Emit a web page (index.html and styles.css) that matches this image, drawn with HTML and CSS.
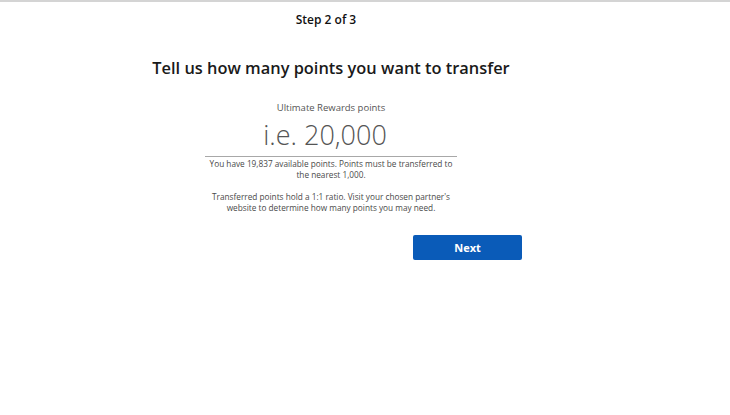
FILE: index.html
```html
<!DOCTYPE html>
<html>
<head>
<meta charset="utf-8">
<link rel="stylesheet" href="styles.css">
</head>
<body>
<div class="topline"></div>
<main class="page">
  <div class="step">Step 2 of 3</div>
  <h1 class="title">Tell us how many points you want to transfer</h1>
  <div class="field">
    <label class="label" for="pts">Ultimate Rewards points</label>
    <input class="input" id="pts" type="text" placeholder="i.e. 20,000">
    <p class="help">You have 19,837 available points. Points must be transferred to the nearest 1,000.</p>
    <p class="help help-gap">Transferred points hold a 1:1 ratio. Visit your chosen partner's website to determine how many points you may need.</p>
  </div>
  <div class="actions">
    <button class="next">Next</button>
  </div>
</main>
</body>
</html>
```

FILE: styles.css
```css
* { box-sizing: border-box; }
html, body { margin: 0; padding: 0; background: #fff; }
body { font-family: "Open Sans", "Noto Sans", sans-serif; color: #1a1a1a; width: 730px; }
.topline { height: 2px; background: #d4d4d4; }
.page { width: 382px; margin-left: 140px; display: flex; flex-direction: column; align-items: center; }
.step { margin-top: 10px; font-size: 12px; font-weight: 600; line-height: 16px; color: #111; margin-left: -10px; }
.title { margin: 28px 0 0; font-size: 16.4px; font-weight: 600; line-height: 24px; color: #1a1a1a; }
.field { width: 252px; margin-top: 21px; display: flex; flex-direction: column; align-items: center; }
.label { font-size: 9.5px; color: #555; line-height: 14px; }
.input { width: 252px; border: none; border-bottom: 1px solid #a8a8a8; outline: none; text-align: center; font-family: inherit; font-size: 27px; font-weight: 300; color: #444; padding: 0 12px 3px 0; line-height: 38px; height: 42px; }
.input::placeholder { color: #555; }
.help { margin: 2px 0 0; padding: 0 2px; font-size: 8.25px; line-height: 10.5px; color: #4a4a4a; text-align: center; }
.help-gap { margin-top: 12px; }
.actions { width: 100%; display: flex; justify-content: flex-end; margin-top: 22px; }
.next { width: 109px; height: 25px; background: #0a5bb8; color: #fff; border: none; border-radius: 2px; font-family: inherit; font-size: 11px; font-weight: 700; padding: 0; }
```
